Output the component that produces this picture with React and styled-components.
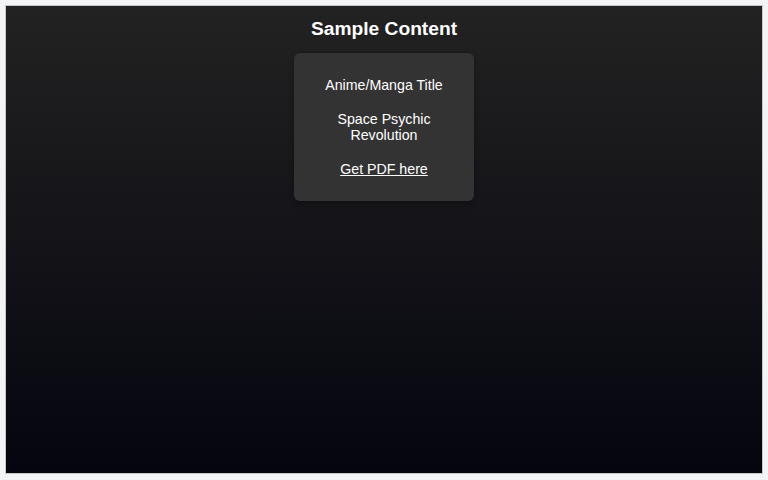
import React from "react";
import styled, { createGlobalStyle } from "styled-components";

const GlobalStyle = createGlobalStyle`
  html, body {
    margin: 0;
    padding: 0;
    background: #f3f4f5;
  }
  body {
    padding: 5px 5px 6px 5px;
    font-family: "Liberation Sans", Arial, sans-serif;
  }
`;

const Page = styled.div`
  box-sizing: border-box;
  height: 469px;
  border: 1px solid #c8c8c8;
  background: linear-gradient(180deg, #222222 0%, #05050f 100%);
  display: flex;
  flex-direction: column;
  align-items: center;
  padding-top: 12px;
  color: #ffffff;
`;

const Title = styled.h1`
  margin: 0 0 13px;
  font-size: 19.2px;
  line-height: 22px;
  font-weight: bold;
`;

const Card = styled.div`
  box-sizing: border-box;
  width: 180px;
  padding: 24px 20px;
  background: #333333;
  border-radius: 6px;
  box-shadow: 0 2px 6px rgba(0, 0, 0, 0.3);
  text-align: center;
  font-size: 14.2px;
  line-height: 16px;
`;

const Line = styled.p`
  margin: 0 0 18px;
  &:last-child {
    margin-bottom: 0;
  }
`;

const PdfLink = styled.a`
  color: #ffffff;
  text-decoration: underline;
`;

const App = () => {
  return (
    <>
      <GlobalStyle />
      <Page>
        <Title>Sample Content</Title>
        <Card>
          <Line>Anime/Manga Title</Line>
          <Line>Space Psychic Revolution</Line>
          <Line>
            <PdfLink href="#">Get PDF here</PdfLink>
          </Line>
        </Card>
      </Page>
    </>
  );
};

export default App;
